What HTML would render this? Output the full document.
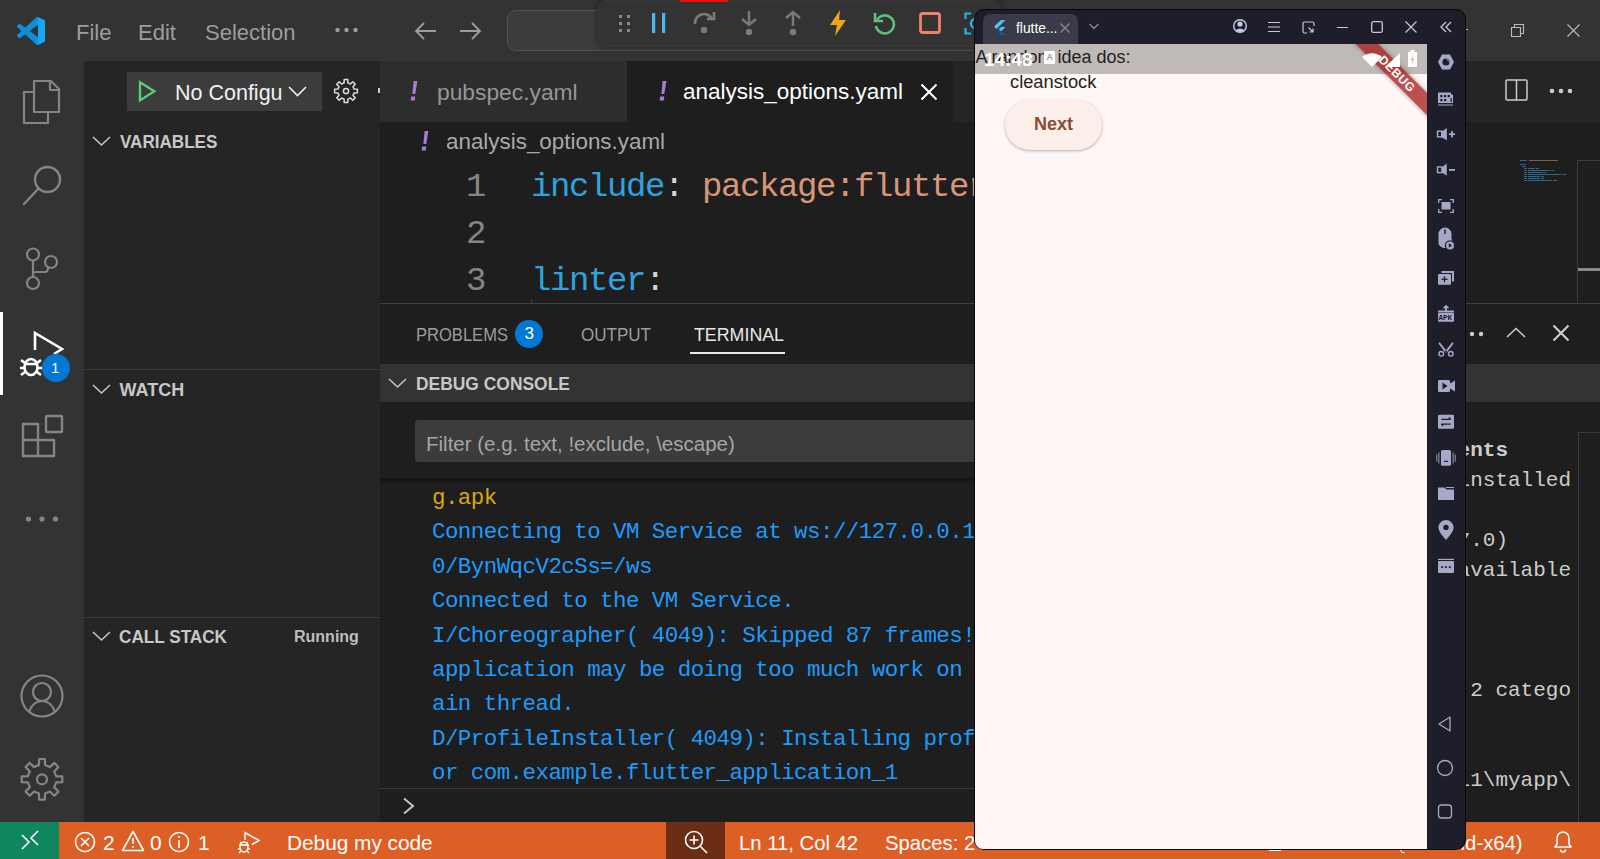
<!DOCTYPE html>
<html><head><meta charset="utf-8">
<style>
*{margin:0;padding:0;box-sizing:border-box}
html,body{width:1600px;height:859px;overflow:hidden;background:#1e1e1e;font-family:"Liberation Sans",sans-serif;position:relative}
.a{position:absolute}
.mono{font-family:"Liberation Mono",monospace}
svg{position:absolute;overflow:visible}
.t{position:absolute;white-space:pre;line-height:1}
</style></head><body>
<!-- TITLE BAR -->
<div class="a" style="left:0;top:0;width:1600px;height:61px;background:#333333"></div>
<svg style="left:17px;top:17px" width="28" height="28" viewBox="0 0 100 100">
  <path d="M96.46 10.8L75.86.87a6.23 6.23 0 00-7.1 1.2L29.33 38.03 12.15 25a4.16 4.16 0 00-5.32.24L1.33 30.250a4.17 4.17 0 000 6.16L16.23 50 1.33 63.59a4.17 4.17 0 000 6.16l5.5 5a4.16 4.16 0 005.32.24l17.18-13.04 39.43 35.970a6.23 6.23 0 007.1 1.2l20.6-9.92A6.25 6.25 0 00100 83.6V16.4a6.25 6.25 0 00-3.54-5.6zM75.01 72.7L45.1 50l29.91-22.7v45.4z" fill="#0f8fdb"/>
  <path d="M75 1 L96.46 10.8 A6.25 6.25 0 0 1 100 16.4 V83.6 A6.25 6.25 0 0 1 96.46 89.2 L75 99 Z" fill="#14a8f2"/>
</svg>
<div class="t" style="left:76px;top:21.5px;font-size:22px;color:#9d9d9d">File</div>
<div class="t" style="left:138px;top:21.5px;font-size:22px;color:#9d9d9d">Edit</div>
<div class="t" style="left:205px;top:21.5px;font-size:22px;color:#9d9d9d">Selection</div>
<svg style="left:335px;top:27px" width="24" height="6"><circle cx="2.5" cy="3" r="2.2" fill="#9d9d9d"/><circle cx="11.5" cy="3" r="2.2" fill="#9d9d9d"/><circle cx="20.5" cy="3" r="2.2" fill="#9d9d9d"/></svg>
<svg style="left:413px;top:20px" width="24" height="22" viewBox="0 0 24 22"><path d="M23 11H3M11 3L3 11L11 19" stroke="#9d9d9d" stroke-width="1.8" fill="none"/></svg>
<svg style="left:459px;top:20px" width="24" height="22" viewBox="0 0 24 22"><path d="M1 11H21M13 3L21 11L13 19" stroke="#9d9d9d" stroke-width="1.8" fill="none"/></svg>
<div class="a" style="left:507px;top:10px;width:640px;height:41px;border-radius:9px;background:#3c3c3c;border:1px solid #525252"></div>
<!-- window controls (partially behind emulator) -->
<div class="a" style="left:1450px;top:29px;width:18px;height:1.3px;background:#bbbbbb"></div>
<svg style="left:1511px;top:24px" width="13" height="13" viewBox="0 0 13 13"><path d="M0.5 3.5H9.5V12.5H0.5Z M3.5 3.5V0.5H12.5V9.5H9.5" stroke="#bbbbbb" stroke-width="1.1" fill="none"/></svg>
<svg style="left:1567px;top:24px" width="13" height="13" viewBox="0 0 13 13"><path d="M0.5 0.5L12.5 12.5M12.5 0.5L0.5 12.5" stroke="#bbbbbb" stroke-width="1.1" fill="none"/></svg>
<!-- debug toolbar -->
<div class="a" style="left:598px;top:0;width:403px;height:47px;background:#333333;border-radius:8px;box-shadow:0 0 6px rgba(0,0,0,0.55);border:1px solid #383838"></div>
<div class="a" style="left:680px;top:0;width:48px;height:2px;background:#e51400"></div>
<svg style="left:618px;top:14px" width="14" height="20"><g fill="#8a8a8a"><rect x="1" y="1" width="3" height="3"/><rect x="9" y="1" width="3" height="3"/><rect x="1" y="8" width="3" height="3"/><rect x="9" y="8" width="3" height="3"/><rect x="1" y="15" width="3" height="3"/><rect x="9" y="15" width="3" height="3"/></g></svg>
<svg style="left:651px;top:12px" width="16" height="22"><g fill="#4fb4f0"><rect x="1" y="1" width="3.2" height="20"/><rect x="11" y="1" width="3.2" height="20"/></g></svg>
<!-- step over (disabled gray) -->
<svg style="left:692px;top:11px" width="26" height="24" viewBox="0 0 26 24"><path d="M3 13 A9 9 0 0 1 20 8" stroke="#7b7b7b" stroke-width="2.6" fill="none"/><path d="M15 8H22V1" stroke="#7b7b7b" stroke-width="2.6" fill="none"/><circle cx="12" cy="19" r="3.2" fill="#7b7b7b"/></svg>
<svg style="left:738px;top:10px" width="22" height="26" viewBox="0 0 22 26"><path d="M11 1V15M4 9L11 15L18 9" stroke="#7b7b7b" stroke-width="2.4" fill="none"/><circle cx="11" cy="22" r="3.2" fill="#7b7b7b"/></svg>
<svg style="left:782px;top:10px" width="22" height="26" viewBox="0 0 22 26"><path d="M11 16V2M4 8L11 2L18 8" stroke="#7b7b7b" stroke-width="2.4" fill="none"/><circle cx="11" cy="22" r="3.2" fill="#7b7b7b"/></svg>
<svg style="left:829px;top:10px" width="18" height="26" viewBox="0 0 18 26"><path d="M11 0L1 15H8L6 26L17 10H10Z" fill="#f4a21a"/></svg>
<svg style="left:872px;top:11px" width="24" height="24" viewBox="0 0 24 24"><path d="M5 9 A9 9 0 1 1 4 15" stroke="#5cc27a" stroke-width="2.6" fill="none"/><path d="M3 2V10H11" stroke="#5cc27a" stroke-width="2.6" fill="none"/></svg>
<svg style="left:919px;top:12px" width="22" height="22" viewBox="0 0 22 22"><rect x="1.5" y="1.5" width="19" height="19" rx="2" stroke="#f0806a" stroke-width="2.8" fill="none"/></svg>
<svg style="left:964px;top:12px" width="14" height="24" viewBox="0 0 14 24"><path d="M7 1.5H1.5V7M1.5 16V21.5H7" stroke="#1fb5e6" stroke-width="2.2" fill="none"/><circle cx="11.5" cy="11.5" r="4.6" stroke="#1fb5e6" stroke-width="2.2" fill="none"/></svg>
<!-- ACTIVITY BAR -->
<div class="a" style="left:0;top:61px;width:84px;height:761px;background:#333333"></div>
<!-- explorer -->
<svg style="left:0;top:61px" width="84" height="84" viewBox="0 0 84 84"><g stroke="#858585" stroke-width="2.2" fill="none" stroke-linejoin="round">
<path d="M33 31H24V62H48V52"/>
<path d="M34 20H51L59 28V51H34Z"/><path d="M50 20V29H59"/></g></svg>
<!-- search -->
<svg style="left:0;top:145px" width="84" height="84" viewBox="0 0 84 84"><g stroke="#858585" stroke-width="2.4" fill="none">
<circle cx="47.5" cy="34.5" r="12.5"/><path d="M38 44L24 59" stroke-linecap="round"/></g></svg>
<!-- source control -->
<svg style="left:0;top:230px" width="84" height="84" viewBox="0 0 84 84"><g stroke="#858585" stroke-width="2.2" fill="none">
<circle cx="33" cy="24.5" r="6"/><circle cx="51" cy="32" r="6"/><circle cx="33" cy="53" r="6"/>
<path d="M33 30.5V47M33 43 Q33 42 37 42H45Q48 42 48 37"/></g></svg>
<!-- active indicator -->
<div class="a" style="left:0;top:312px;width:3px;height:83px;background:#ffffff"></div>
<!-- run & debug -->
<svg style="left:0;top:312px" width="84" height="84" viewBox="0 0 84 84"><g stroke="#ffffff" stroke-width="2.6" fill="none">
<path d="M35 38V21L62 37L54 42"/>
<ellipse cx="31" cy="55" rx="6.5" ry="8"/><path d="M25 52H37M21 48L25 51M41 48L37 51M20 56H25M37 56H42M21 63L25 60M41 63L37 60"/></g>
<circle cx="56" cy="56" r="14" fill="#0078d4"/>
</svg>
<div class="t" style="left:51px;top:360px;font-size:15px;color:#fff">1</div>
<!-- extensions -->
<svg style="left:0;top:396px" width="84" height="84" viewBox="0 0 84 84"><g stroke="#858585" stroke-width="2.4" fill="none" stroke-linejoin="round">
<path d="M23 28H38V44H54V60H23Z M23 44H38V60"/><rect x="46" y="20" width="16" height="16" rx="1"/></g></svg>
<!-- more -->
<svg style="left:0;top:479px" width="84" height="84" viewBox="0 0 84 84"><g fill="#858585"><circle cx="28.5" cy="40" r="2.6"/><circle cx="42" cy="40" r="2.6"/><circle cx="55.5" cy="40" r="2.6"/></g></svg>
<!-- accounts -->
<svg style="left:0;top:654px" width="84" height="84" viewBox="0 0 84 84"><g stroke="#858585" stroke-width="2.2" fill="none">
<circle cx="42" cy="42" r="20.5"/><circle cx="42" cy="38" r="9"/><path d="M29 58 Q33 47 42 47 Q51 47 55 58"/></g></svg>
<!-- gear -->
<svg style="left:0;top:737px" width="84" height="84" viewBox="0 0 84 84"><g stroke="#858585" stroke-width="2.2" fill="none" stroke-linejoin="round">
<path d="M56.2 39.3 L62.3 39.4 L62.3 45.2 L56.2 45.3 L54.2 50.2 L58.4 54.6 L54.3 58.7 L49.9 54.5 L45.0 56.5 L44.9 62.6 L39.1 62.6 L39.0 56.5 L34.1 54.5 L29.7 58.7 L25.6 54.6 L29.8 50.2 L27.8 45.3 L21.7 45.2 L21.7 39.4 L27.8 39.3 L29.8 34.4 L25.6 30.0 L29.7 25.9 L34.1 30.1 L39.0 28.1 L39.1 22.0 L44.9 22.0 L45.0 28.1 L49.9 30.1 L54.3 25.9 L58.4 30.0 L54.2 34.4Z"/>
<circle cx="42" cy="42.3" r="5"/></g></svg>

<!-- SIDEBAR -->
<div class="a" style="left:84px;top:61px;width:296px;height:761px;background:#252526"></div>
<div class="a" style="left:127px;top:72px;width:195px;height:39px;background:#3c3c3c"></div>
<svg style="left:138px;top:80px" width="20" height="23" viewBox="0 0 20 23"><path d="M2 2.2L16.3 11.3L2 20.4Z" stroke="#5fc87a" stroke-width="2.4" fill="none" stroke-linejoin="miter"/></svg>
<div class="a" style="left:175px;top:72px;width:108px;height:39px;overflow:hidden"><div class="t" style="left:0;top:11px;font-size:21.5px;color:#f0f0f0">No Configu</div></div>
<svg style="left:288px;top:86px" width="19" height="11" viewBox="0 0 19 11"><path d="M1 1L9.5 9.5L18 1" stroke="#f0f0f0" stroke-width="1.6" fill="none"/></svg>
<svg style="left:333px;top:78px" width="26" height="26" viewBox="0 0 26 26"><g stroke="#dddddd" stroke-width="1.5" fill="none" stroke-linejoin="round">
<path d="M21.1 11.1 L24.4 11.2 L24.4 14.8 L21.1 14.9 L20.0 17.4 L22.3 19.8 L19.8 22.3 L17.4 20.0 L14.9 21.1 L14.8 24.4 L11.2 24.4 L11.1 21.1 L8.6 20.0 L6.2 22.3 L3.7 19.8 L6.0 17.4 L4.9 14.9 L1.6 14.8 L1.6 11.2 L4.9 11.1 L6.0 8.6 L3.7 6.2 L6.2 3.7 L8.6 6.0 L11.1 4.9 L11.2 1.6 L14.8 1.6 L14.9 4.9 L17.4 6.0 L19.8 3.7 L22.3 6.2 L20.0 8.6Z"/><circle cx="13" cy="13" r="2.6"/></g></svg>
<div class="a" style="left:378px;top:88px;width:2px;height:5px;background:#cccccc"></div>
<!-- VARIABLES -->
<svg style="left:92px;top:136px" width="19" height="10" viewBox="0 0 19 10"><path d="M1 1L9.5 9L18 1" stroke="#c5c5c5" stroke-width="1.6" fill="none"/></svg>
<div class="t" style="left:119.5px;top:132.5px;font-size:18px;font-weight:bold;color:#c8c8c8;transform:scaleX(0.948);transform-origin:0 0">VARIABLES</div>
<!-- WATCH -->
<div class="a" style="left:84px;top:369px;width:296px;height:1px;background:#3c3c3c"></div>
<svg style="left:92px;top:384px" width="19" height="10" viewBox="0 0 19 10"><path d="M1 1L9.5 9L18 1" stroke="#c5c5c5" stroke-width="1.6" fill="none"/></svg>
<div class="t" style="left:119.5px;top:380.5px;font-size:18px;font-weight:bold;color:#c8c8c8">WATCH</div>
<!-- CALL STACK -->
<div class="a" style="left:84px;top:617px;width:296px;height:1px;background:#3c3c3c"></div>
<svg style="left:92px;top:631px" width="19" height="10" viewBox="0 0 19 10"><path d="M1 1L9.5 9L18 1" stroke="#c5c5c5" stroke-width="1.6" fill="none"/></svg>
<div class="t" style="left:119px;top:627.8px;font-size:18px;font-weight:bold;color:#c8c8c8;transform:scaleX(0.953);transform-origin:0 0">CALL STACK</div>
<div class="t" style="left:294px;top:629px;font-size:16px;font-weight:bold;color:#bdbdbd">Running</div>
<!-- EDITOR -->
<div class="a" style="left:380px;top:61px;width:1220px;height:61px;background:#252526"></div>
<div class="a" style="left:380px;top:61px;width:247px;height:61px;background:#2d2d2d"></div>
<div class="a" style="left:627px;top:61px;width:326px;height:61px;background:#1e1e1e"></div>
<svg style="left:410px;top:81px" width="8" height="20" viewBox="0 0 8 20"><path d="M3.6 0H7.4L5.3 13H2.4Z M1.1 15.6H5.3L4.8 19.4H0.6Z" fill="#a97bd1"/></svg>
<div class="t" style="left:437px;top:81px;font-size:22.8px;color:#969696">pubspec.yaml</div>
<svg style="left:659px;top:81px" width="8" height="20" viewBox="0 0 8 20"><path d="M3.6 0H7.4L5.3 13H2.4Z M1.1 15.6H5.3L4.8 19.4H0.6Z" fill="#a97bd1"/></svg>
<div class="t" style="left:683px;top:81px;font-size:22.5px;color:#ffffff">analysis_options.yaml</div>
<svg style="left:920px;top:83px" width="18" height="18" viewBox="0 0 18 18"><path d="M1.5 1.5L16.5 16.5M16.5 1.5L1.5 16.5" stroke="#ffffff" stroke-width="2" fill="none"/></svg>
<!-- split / more -->
<svg style="left:1505px;top:79px" width="23" height="22" viewBox="0 0 23 22"><g stroke="#cccccc" stroke-width="1.5" fill="none"><rect x="1" y="1" width="21" height="20" rx="1"/><path d="M11.5 1V21"/></g></svg>
<svg style="left:1548px;top:87px" width="26" height="8"><g fill="#cccccc"><circle cx="4" cy="4" r="2.3"/><circle cx="13" cy="4" r="2.3"/><circle cx="22" cy="4" r="2.3"/></g></svg>
<!-- editor body -->
<div class="a" style="left:380px;top:122px;width:1220px;height:181px;background:#1e1e1e"></div>
<svg style="left:421px;top:131px" width="8" height="20" viewBox="0 0 8 20"><path d="M3.6 0H7.4L5.3 13H2.4Z M1.1 15.6H5.3L4.8 19.4H0.6Z" fill="#a97bd1"/></svg>
<div class="t" style="left:446px;top:131px;font-size:22.4px;color:#a9a9a9">analysis_options.yaml</div>
<div class="t mono" style="left:466px;top:169px;font-size:34px;color:#858585;margin-top:1px">1</div>
<div class="t mono" style="left:466px;top:216px;font-size:34px;color:#858585;margin-top:1px">2</div>
<div class="t mono" style="left:466px;top:263px;font-size:34px;color:#858585;margin-top:1px">3</div>
<div class="t mono" style="left:531px;top:170px;font-size:34px;letter-spacing:-1.4px;color:#2ea3de">include<span style="color:#d4d4d4">: </span><span style="color:#d9957a">package:flutter_lints/flutter.yaml</span></div>
<div class="t mono" style="left:531px;top:264px;font-size:34px;letter-spacing:-1.4px;color:#2ea3de">linter<span style="color:#d4d4d4">:</span></div>
<div class="a" style="left:531px;top:299px;width:1px;height:4px;background:#404040"></div>
<!-- minimap -->
<svg style="left:1520px;top:159px" width="56" height="26" viewBox="0 0 56 26"><g stroke-width="0.9" opacity="0.75">
<path d="M0 1.5H7" stroke="#3a8cc0"/><path d="M9 1.5H38" stroke="#b77a5e"/>
<path d="M0 5.5H6" stroke="#3a8cc0"/><path d="M2 7.5H6" stroke="#3a8cc0"/>
<path d="M4 9.5H7M8 9.5H15M16 9.5H19" stroke="#3a8cc0"/><path d="M4 11.5H7M8 11.5H30M31 11.5H34" stroke="#3a8cc0"/><path d="M4 13.5H7M8 13.5H22M23 13.5H26" stroke="#3a8cc0"/><path d="M4 15.5H7M8 15.5H41M42 15.5H46" stroke="#3a8cc0"/><path d="M4 17.5H7M8 17.5H20M21 17.5H24" stroke="#3a8cc0"/><path d="M4 19.5H7M8 19.5H20M21 19.5H24" stroke="#3a8cc0"/><path d="M4 21.5H7M8 21.5H32M33 21.5H37" stroke="#3a8cc0"/>
</g></svg>
<div class="a" style="left:1577px;top:160px;width:23px;height:143px;border-left:1px solid #3c3c3c;border-top:1px solid #3c3c3c"></div>
<div class="a" style="left:1578px;top:268px;width:22px;height:3px;background:#8a8a8a"></div>

<!-- PANEL -->
<div class="a" style="left:380px;top:303px;width:1220px;height:1px;background:#3f3f3f"></div>
<div class="a" style="left:380px;top:304px;width:1220px;height:518px;background:#1e1e1e"></div>
<div class="t" style="left:416px;top:325px;font-size:19px;transform:scaleX(0.871);transform-origin:0 0;color:#9d9d9d">PROBLEMS</div>
<svg style="left:515px;top:320px" width="28" height="28"><circle cx="14" cy="14" r="14" fill="#0078d4"/></svg>
<div class="t" style="left:524.5px;top:324.5px;font-size:17px;color:#ffffff">3</div>
<div class="t" style="left:581px;top:325px;font-size:19px;transform:scaleX(0.896);transform-origin:0 0;color:#9d9d9d">OUTPUT</div>
<div class="t" style="left:694px;top:325px;font-size:19px;transform:scaleX(0.937);transform-origin:0 0;color:#e7e7e7">TERMINAL</div>
<div class="a" style="left:690px;top:352px;width:95px;height:2px;background:#e7e7e7"></div>
<svg style="left:1466px;top:330px" width="20" height="8"><g fill="#cccccc"><circle cx="6" cy="4" r="2.2"/><circle cx="15" cy="4" r="2.2"/></g></svg>
<svg style="left:1506px;top:327px" width="20" height="11" viewBox="0 0 20 11"><path d="M1 10L10 1.5L19 10" stroke="#cccccc" stroke-width="1.6" fill="none"/></svg>
<svg style="left:1552px;top:324px" width="18" height="18" viewBox="0 0 18 18"><path d="M1.5 1.5L16.5 16.5M16.5 1.5L1.5 16.5" stroke="#cccccc" stroke-width="2.2" fill="none"/></svg>
<!-- debug console header -->
<div class="a" style="left:380px;top:364px;width:1220px;height:38px;background:#333333"></div>
<svg style="left:388px;top:378px" width="19" height="10" viewBox="0 0 19 10"><path d="M1 1L9.5 9L18 1" stroke="#c5c5c5" stroke-width="1.6" fill="none"/></svg>
<div class="t" style="left:416px;top:374.8px;font-size:18px;font-weight:bold;color:#c8c8c8;transform:scaleX(0.968);transform-origin:0 0">DEBUG CONSOLE</div>
<!-- filter -->
<div class="a" style="left:415px;top:420px;width:1000px;height:42px;background:#3c3c3c;border-radius:3px"></div>
<div class="t" style="left:426px;top:434px;font-size:20.5px;color:#a6a6a6">Filter (e.g. text, !exclude, \escape)</div>
<div class="a" style="left:380px;top:478px;width:600px;height:6px;background:linear-gradient(#121212,#1e1e1e)"></div>
<!-- console output -->
<div class="a mono" style="left:432px;top:481px;width:560px;overflow:hidden;font-size:22.5px;letter-spacing:-0.57px;line-height:34.4px;white-space:pre;color:#1e9bfa"><div style="color:#dca60e;height:34.4px">g.apk</div><div style="height:34.4px">Connecting to VM Service at ws://127.0.0.1:53450/BynWqcV2cSs=/ws</div><div style="height:34.4px">0/BynWqcV2cSs=/ws</div><div style="height:34.4px">Connected to the VM Service.</div><div style="height:34.4px">I/Choreographer( 4049): Skipped 87 frames!  The</div><div style="height:34.4px">application may be doing too much work on its m</div><div style="height:34.4px">ain thread.</div><div style="height:34.4px">D/ProfileInstaller( 4049): Installing profile f</div><div style="height:34.4px">or com.example.flutter_application_1</div></div>
<div class="a" style="left:380px;top:788px;width:600px;height:1px;background:#3a3a3a"></div>
<svg style="left:402px;top:797px" width="14" height="18" viewBox="0 0 14 18"><path d="M2 1.5L11 9L2 16.5" stroke="#c5c5c5" stroke-width="2" fill="none"/></svg>
<!-- right terminal fragments -->
<div class="a" style="left:1578px;top:432px;width:22px;height:390px;border-left:1px solid #3a3a3a;border-top:1px solid #3a3a3a"></div>
<div class="a mono" style="left:1457.6px;top:436px;font-size:21px;line-height:30px;white-space:pre;color:#cccccc"><div style="font-weight:bold;height:30px">ents</div><div style="height:30px">installed</div><div style="height:30px"> </div><div style="height:30px">7.0)</div><div style="height:30px">available</div><div style="height:30px"> </div><div style="height:30px"> </div><div style="height:30px"> </div><div style="height:30px"> 2 catego</div><div style="height:30px"> </div><div style="height:30px"> </div><div style="height:30px">l1\myapp\</div></div>
<!-- STATUS BAR -->
<div class="a" style="left:0;top:822px;width:1600px;height:37px;background:#dc5f26"></div>
<div class="a" style="left:0;top:822px;width:59px;height:37px;background:#0f8660"></div>
<svg style="left:20px;top:829px" width="20" height="22" viewBox="0 0 20 22"><path d="M2 20L9 13L2 6M18 2L11 9L18 16" stroke="#ffffff" stroke-width="1.6" fill="none"/></svg>
<svg style="left:74px;top:831px" width="22" height="22" viewBox="0 0 22 22"><g stroke="#ffffff" stroke-width="1.6" fill="none"><circle cx="11" cy="11" r="9.5"/><path d="M7 7L15 15M15 7L7 15"/></g></svg>
<div class="t" style="left:103px;top:832px;font-size:21px;color:#ffffff">2</div>
<svg style="left:121px;top:830px" width="24" height="22" viewBox="0 0 24 22"><g stroke="#ffffff" stroke-width="1.6" fill="none" stroke-linejoin="round"><path d="M12 1.5L22.5 20.5H1.5Z"/><path d="M12 8V14M12 16V18"/></g></svg>
<div class="t" style="left:150px;top:832px;font-size:21px;color:#ffffff">0</div>
<svg style="left:168px;top:831px" width="22" height="22" viewBox="0 0 22 22"><g stroke="#ffffff" stroke-width="1.6" fill="none"><circle cx="11" cy="11" r="9.5"/><path d="M11 9V17M11 5V7"/></g></svg>
<div class="t" style="left:198px;top:832px;font-size:21px;color:#ffffff">1</div>
<svg style="left:235px;top:831px" width="26" height="24" viewBox="0 0 26 24"><g stroke="#ffffff" stroke-width="1.5" fill="none"><path d="M10 9V1.5L24 9.5L17 13.5"/><ellipse cx="9" cy="16" rx="4" ry="5"/><path d="M4 14H14M3 18H5M13 18H15M4 22L6 20M14 22L12 20M5 11L7 12.5M13 11L11 12.5"/></g></svg>
<div class="t" style="left:287px;top:833px;font-size:20.8px;color:#ffffff">Debug my code</div>
<div class="a" style="left:666px;top:822px;width:59px;height:37px;background:#6b2e14"></div>
<svg style="left:684px;top:830px" width="24" height="24" viewBox="0 0 24 24"><g stroke="#ffffff" stroke-width="1.6" fill="none"><circle cx="10" cy="10" r="8.5"/><path d="M16 16L23 23M10 5.5V14.5M5.5 10H14.5"/></g></svg>
<div class="t" style="left:739px;top:833px;font-size:20.3px;color:#ffffff">Ln 11, Col 42</div>
<div class="t" style="left:885px;top:833px;font-size:20.3px;color:#ffffff">Spaces: 2</div>
<div class="t" style="left:1420px;top:833px;font-size:20.3px;color:#ffffff">ndroid-x64)</div>
<div class="a" style="left:1269px;top:849.5px;width:12px;height:1.5px;background:#fff"></div><div class="a" style="left:1401px;top:850px;width:3px;height:3px;border-bottom:1.5px solid #fff;border-left:1.5px solid #fff;transform:skewX(30deg)"></div>
<svg style="left:1551px;top:829px" width="24" height="24" viewBox="0 0 24 24"><g stroke="#ffffff" stroke-width="1.6" fill="none" stroke-linejoin="round"><path d="M4 18H20L18 15V9A6 6 0 0 0 6 9V15Z"/><path d="M9.5 20.5A2.5 2.5 0 0 0 14.5 20.5"/></g></svg>
<!-- EMULATOR -->
<div class="a" style="left:974px;top:9px;width:492px;height:841px;background:#1e1e2a;border-radius:10px;border:1px solid rgba(0,0,0,0.7)"></div>
<!-- tab -->
<div class="a" style="left:983px;top:14px;width:95px;height:30px;background:#3a3a48;border-radius:7px 7px 0 0"></div>
<svg style="left:993px;top:20px" width="13" height="15" viewBox="0 0 13 15"><path d="M8 0H12.5L3.5 9L1 6.5Z" fill="#4cc3f5"/><path d="M8 7H12.5L8 11.5L5.7 9.3Z" fill="#4cc3f5"/><path d="M5.7 9.3L8 11.5L12.5 15H8L5.7 12.8Z" fill="#0b5ea8"/></svg>
<div class="t" style="left:1016px;top:21.5px;font-size:13.8px;color:#ffffff">flutte...</div>
<svg style="left:1060px;top:23px" width="10" height="10" viewBox="0 0 10 10"><path d="M0.5 0.5L9.5 9.5M9.5 0.5L0.5 9.5" stroke="#8e8e9a" stroke-width="1.1" fill="none"/></svg>
<svg style="left:1089px;top:23px" width="10" height="7" viewBox="0 0 10 7"><path d="M0.5 0.8L5 5.3L9.5 0.8" stroke="#9a9aae" stroke-width="1.2" fill="none"/></svg>
<!-- window controls -->
<svg style="left:1232px;top:18px" width="16" height="16" viewBox="0 0 16 16"><circle cx="8" cy="8" r="6.3" fill="none" stroke="#c8c6e6" stroke-width="1.4"/><circle cx="8" cy="6" r="2.6" fill="#c8c6e6"/><path d="M3.5 12.5Q8 8.5 12.5 12.5A6.3 6.3 0 0 1 3.5 12.5Z" fill="#c8c6e6"/></svg>
<svg style="left:1268px;top:21px" width="12" height="12" viewBox="0 0 12 12"><path d="M0 1.5H12M0 6H12M0 10.5H12" stroke="#c8c6e6" stroke-width="1.2"/></svg>
<svg style="left:1302px;top:21px" width="13" height="13" viewBox="0 0 13 13"><path d="M5 12H2.5A1.5 1.5 0 0 1 1 10.5V2.5A1.5 1.5 0 0 1 2.5 1H10.5A1.5 1.5 0 0 1 12 2.5V5M6.5 6.5L11 11M11 7.5V11H7.5" stroke="#c8c6e6" stroke-width="1.2" fill="none"/></svg>
<div class="a" style="left:1337px;top:27px;width:11px;height:1.3px;background:#c8c6e6"></div>
<svg style="left:1371px;top:21px" width="12" height="12" viewBox="0 0 12 12"><rect x="0.7" y="0.7" width="10.6" height="10.6" rx="1.5" stroke="#c8c6e6" stroke-width="1.3" fill="none"/></svg>
<svg style="left:1405px;top:21px" width="12" height="12" viewBox="0 0 12 12"><path d="M0.5 0.5L11.5 11.5M11.5 0.5L0.5 11.5" stroke="#c8c6e6" stroke-width="1.2" fill="none"/></svg>
<svg style="left:1440px;top:21px" width="12" height="12" viewBox="0 0 12 12"><path d="M6 1L1 6L6 11M11 1L6 6L11 11" stroke="#c8c6e6" stroke-width="1.3" fill="none"/></svg>

<!-- screen -->
<div class="a" style="left:975px;top:44px;width:452px;height:805px;background:#fef7f5;border-radius:0 0 0 8px;overflow:hidden">
  <div class="a" style="left:0;top:0;width:452px;height:30px;background:#bfbab7"></div>
  <div class="t" style="left:0.5px;top:4px;font-size:18px;color:#231f1e">A random idea dos:</div>
  <div class="t" style="left:9px;top:6px;font-size:19px;font-weight:bold;color:#ffffff">14:48</div>
  <div class="a" style="left:69px;top:7px;width:11px;height:13px;background:#ffffff;border-radius:1.5px"></div>
  <div class="t" style="left:71.5px;top:9px;font-size:9px;font-weight:bold;color:#9e9a98">A</div>
  <div class="t" style="left:35px;top:29px;font-size:18.3px;color:#231f1e">cleanstock</div>
  <div class="a" style="left:30px;top:56px;width:97px;height:50px;background:#fcefea;border-radius:25px;box-shadow:0 1px 3px rgba(0,0,0,0.3)"></div>
  <div class="t" style="left:59px;top:71px;font-size:18px;font-weight:bold;color:#8b4a35">Next</div>
  <!-- debug banner -->
  <div class="a" style="left:362px;top:21.5px;width:120px;height:16px;background:rgba(165,22,22,0.74);transform:rotate(45deg);box-shadow:0 0 5px rgba(0,0,0,0.35);text-align:center;font-size:12px;line-height:16px;font-weight:bold;color:#fff;letter-spacing:0.5px">DEBUG</div>
  <!-- status icons -->
  <svg style="left:387px;top:8px" width="46" height="16" viewBox="0 0 46 16"><path d="M0 5 Q10 -2.5 20 5 L10 15 Z" fill="#ffffff"/><path d="M38 1V15H23Z" fill="#ffffff"/></svg>
  <svg style="left:432px;top:6px" width="12" height="18" viewBox="0 0 12 18"><path d="M3.5 0H7.5V2H10V17H1V2H3.5Z" fill="#ffffff"/><path d="M6.5 5L3.5 10H5.5L4.5 14L7.5 9H5.5Z" fill="#bfbab7"/></svg>
</div>

<!-- right toolbar icons -->
<svg style="left:1427px;top:0" width="39" height="600" viewBox="1427 0 39 600"><g fill="#a9a7c7">
<path d="M1442 54.5H1450L1454 62L1450 69.5H1442L1438 62Z"/><circle cx="1446" cy="62" r="3.6" fill="#1e1e2a"/><path d="M1446 58.4A3.6 3.6 0 0 1 1449.6 62H1448A2 2 0 0 0 1446 60Z" fill="#a9a7c7" opacity="0.5"/>
<path d="M1438 92.5H1453V103H1438Z"/><rect x="1438" y="104.5" width="15" height="1"/><g fill="#1e1e2a"><rect x="1440.3" y="95" width="2.2" height="2.2"/><rect x="1444" y="95" width="2.2" height="2.2"/><rect x="1447.7" y="95" width="2.2" height="2.2"/><rect x="1440.3" y="99" width="2.2" height="2.2"/><rect x="1444" y="99" width="2.2" height="2.2"/><rect x="1450.5" y="98" width="1.3" height="4"/><rect x="1451" y="92" width="3" height="2.5"/></g>
<path d="M1441 131H1446.5V128L1446.7 140L1441 137Z"/><rect x="1437.5" y="131.2" width="4.5" height="5.6" fill="none" stroke="#a9a7c7" stroke-width="1.4"/><path d="M1442 131.5L1446.7 128V140L1442 136.5Z"/><rect x="1449" y="133.3" width="6" height="1.8"/><rect x="1451.1" y="131" width="1.8" height="6.5"/>
<rect x="1437.5" y="167" width="4.5" height="5.6" fill="none" stroke="#a9a7c7" stroke-width="1.4"/><path d="M1442 167.3L1446.7 163.6V175.7L1442 172.2Z"/><rect x="1449" y="169" width="6" height="1.8"/>
<rect x="1441.5" y="202" width="9" height="7.5"/><path d="M1438.7 203V199.7H1442M1450 199.7H1453.3V203M1453.3 209V212.3H1450M1442 212.3H1438.7V209" stroke="#a9a7c7" stroke-width="1.3" fill="none"/>
<path d="M1445 227.6A6.5 6.5 0 0 1 1451.5 234.1V238A6.5 6.5 0 0 1 1438.5 243.9V234.1A6.5 6.5 0 0 1 1445 227.6Z"/><rect x="1444.3" y="229.5" width="1.4" height="4.5" fill="#1e1e2a"/><circle cx="1450" cy="245.5" r="5.2" fill="#1e1e2a"/><circle cx="1450" cy="245.5" r="4"/><path d="M1448.8 243.3V247.7L1452.2 245.5Z" fill="#1e1e2a"/>
<path d="M1441.5 271H1454V281.5H1452V273H1441.5Z"/><rect x="1438" y="274" width="13" height="10.7" rx="1.2"/><rect x="1441.5" y="278.6" width="6" height="1.3" fill="#1e1e2a"/><rect x="1443.85" y="276.3" width="1.3" height="6" fill="#1e1e2a"/>
<path d="M1446 304.8L1449.5 308.3H1447V311H1445V308.3H1442.5Z"/><rect x="1438" y="310.5" width="16" height="2"/><rect x="1438" y="313" width="16" height="8.7" rx="0.8"/><g fill="#1e1e2a" font-size="7.5" font-weight="bold" font-family="Liberation Mono"><text x="1438.6" y="320.2">APK</text></g>
<path d="M1439.5 342L1447 351.5L1446 353.5L1438.5 343.5Z M1452.5 342L1445 351.5L1446 353.5L1453.5 343.5Z"/><circle cx="1441.2" cy="353.8" r="2.3" fill="none" stroke="#a9a7c7" stroke-width="1.4"/><circle cx="1450.8" cy="353.8" r="2.3" fill="none" stroke="#a9a7c7" stroke-width="1.4"/>
<rect x="1438" y="380" width="12" height="12" rx="1.3"/><path d="M1450 383.5L1455 380.5V391.5L1450 388.5Z"/><path d="M1442.5 382.6V389.4L1447.6 386Z" fill="#1e1e2a"/>
<rect x="1438" y="414.7" width="16" height="14" rx="1.3"/><path d="M1441.5 419.3H1450.5M1448.8 417.5L1450.8 419.3M1450.5 424.1H1441.5M1443.2 425.9L1441.2 424.1" stroke="#1e1e2a" stroke-width="1.3" fill="none"/>
<rect x="1441" y="450" width="10" height="15.8" rx="1.6"/><rect x="1444" y="460.8" width="4" height="1.2" fill="#1e1e2a"/><path d="M1438.9 452.5V463.5M1436.8 454.5V461.5M1453.1 452.5V463.5M1455.2 454.5V461.5" stroke="#a9a7c7" stroke-width="0.9"/>
<path d="M1438 487.5H1444.5L1446.5 489.5H1454V500H1438Z"/><rect x="1446" y="487" width="8" height="1" />
<path d="M1446 520A7.6 7.6 0 0 1 1453.6 527.6Q1453.6 532 1446 540Q1438.4 532 1438.4 527.6A7.6 7.6 0 0 1 1446 520Z"/><circle cx="1446" cy="527.4" r="2.7" fill="#1e1e2a"/>
<rect x="1438" y="558.8" width="16" height="1.2"/><rect x="1438" y="561" width="16" height="12" rx="1"/><g fill="#1e1e2a"><rect x="1441.3" y="566.2" width="1.8" height="1.8"/><rect x="1445.1" y="566.2" width="1.8" height="1.8"/><rect x="1448.9" y="566.2" width="1.8" height="1.8"/></g>
</g></svg>
<!-- nav buttons -->
<svg style="left:1435px;top:714px" width="22" height="110" viewBox="0 0 22 110"><g stroke="#a9a7c7" stroke-width="1.3" fill="none" stroke-linejoin="round">
<path d="M15 3V17L4 10Z"/><circle cx="10" cy="54" r="7.5"/><rect x="3.5" y="91" width="13" height="13" rx="3"/></g></svg>

</body></html>
